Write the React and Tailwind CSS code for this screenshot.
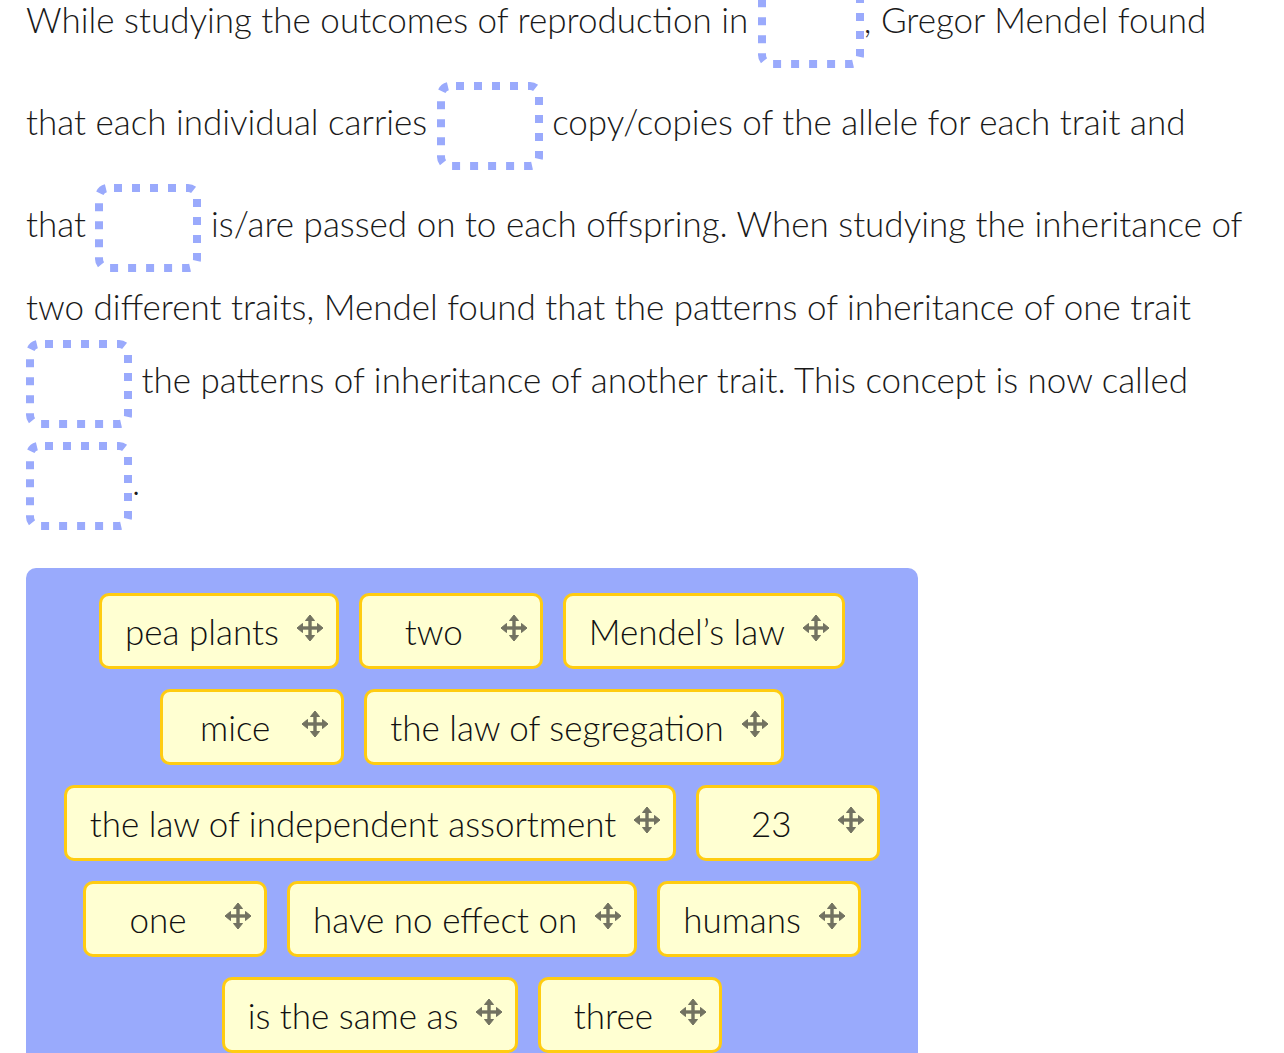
import React from "react";

const Zone = () => (
  <span className="inline-block w-[106px] h-[88px] my-[7px] align-middle">
    <svg width="106" height="88" viewBox="0 0 106 88" className="block">
      <rect
        x="4"
        y="4"
        width="98"
        height="80"
        rx="9"
        fill="none"
        stroke="#9aaafc"
        strokeWidth="8"
        strokeDasharray="8 10"
        strokeDashoffset="-6"
      />
    </svg>
  </span>
);

const MoveIcon = () => (
  <svg width="28" height="28" viewBox="0 0 28 28" className="shrink-0 opacity-80">
    <g fill="#4f4f45" stroke="#4f4f45" strokeLinejoin="round">
      <line x1="14" y1="5" x2="14" y2="23" strokeWidth="3.4" />
      <line x1="5" y1="14" x2="23" y2="14" strokeWidth="3.4" />
      <polygon points="14,1 9.5,6.5 18.5,6.5" strokeWidth="1" />
      <polygon points="14,27 9.5,21.5 18.5,21.5" strokeWidth="1" />
      <polygon points="1,14 6.5,9.5 6.5,18.5" strokeWidth="1" />
      <polygon points="27,14 21.5,9.5 21.5,18.5" strokeWidth="1" />
    </g>
  </svg>
);

const Chip = ({ children }) => (
  <div className="flex items-center h-[76px] pl-[23px] pr-[12px] border-[3px] border-[#ffcc11] rounded-[10px] bg-[#ffffd2]">
    <span className="min-w-[98px] text-center whitespace-nowrap">{children}</span>
    <span className="ml-[17px] flex items-center -mt-[6px]">
      <MoveIcon />
    </span>
  </div>
);

export default function App() {
  const font = { fontFamily: "Lato, 'Liberation Sans', sans-serif" };
  return (
    <div className="bg-white h-[1053px] overflow-hidden text-[#1a1a1a] font-light" style={font}>
      <div className="pl-[26px] -mt-[27px] w-[1246px]">
        <p className="text-[35px] leading-[54px]">
          While studying the outcomes of reproduction in <Zone />, Gregor Mendel found that each individual carries <Zone /> copy/copies of the allele for each trait and that <Zone /> is/are passed on to each offspring. When studying the inheritance of two different traits, Mendel found that the patterns of inheritance of one trait <Zone /> the patterns of inheritance of another trait. This concept is now called <Zone />.
        </p>
      </div>
      <div className="mt-[31px] ml-[26px] w-[892px] bg-[#99aafc] rounded-t-[10px] pt-[25px] px-[20px] pb-[60px] flex flex-wrap justify-center gap-[20px] text-[35px] text-[#111]">
        <Chip>pea plants</Chip>
        <Chip>two</Chip>
        <Chip>Mendel’s law</Chip>
        <Chip>mice</Chip>
        <Chip>the law of segregation</Chip>
        <Chip>the law of independent assortment</Chip>
        <Chip>23</Chip>
        <Chip>one</Chip>
        <Chip>have no effect on</Chip>
        <Chip>humans</Chip>
        <Chip>is the same as</Chip>
        <Chip>three</Chip>
      </div>
    </div>
  );
}
